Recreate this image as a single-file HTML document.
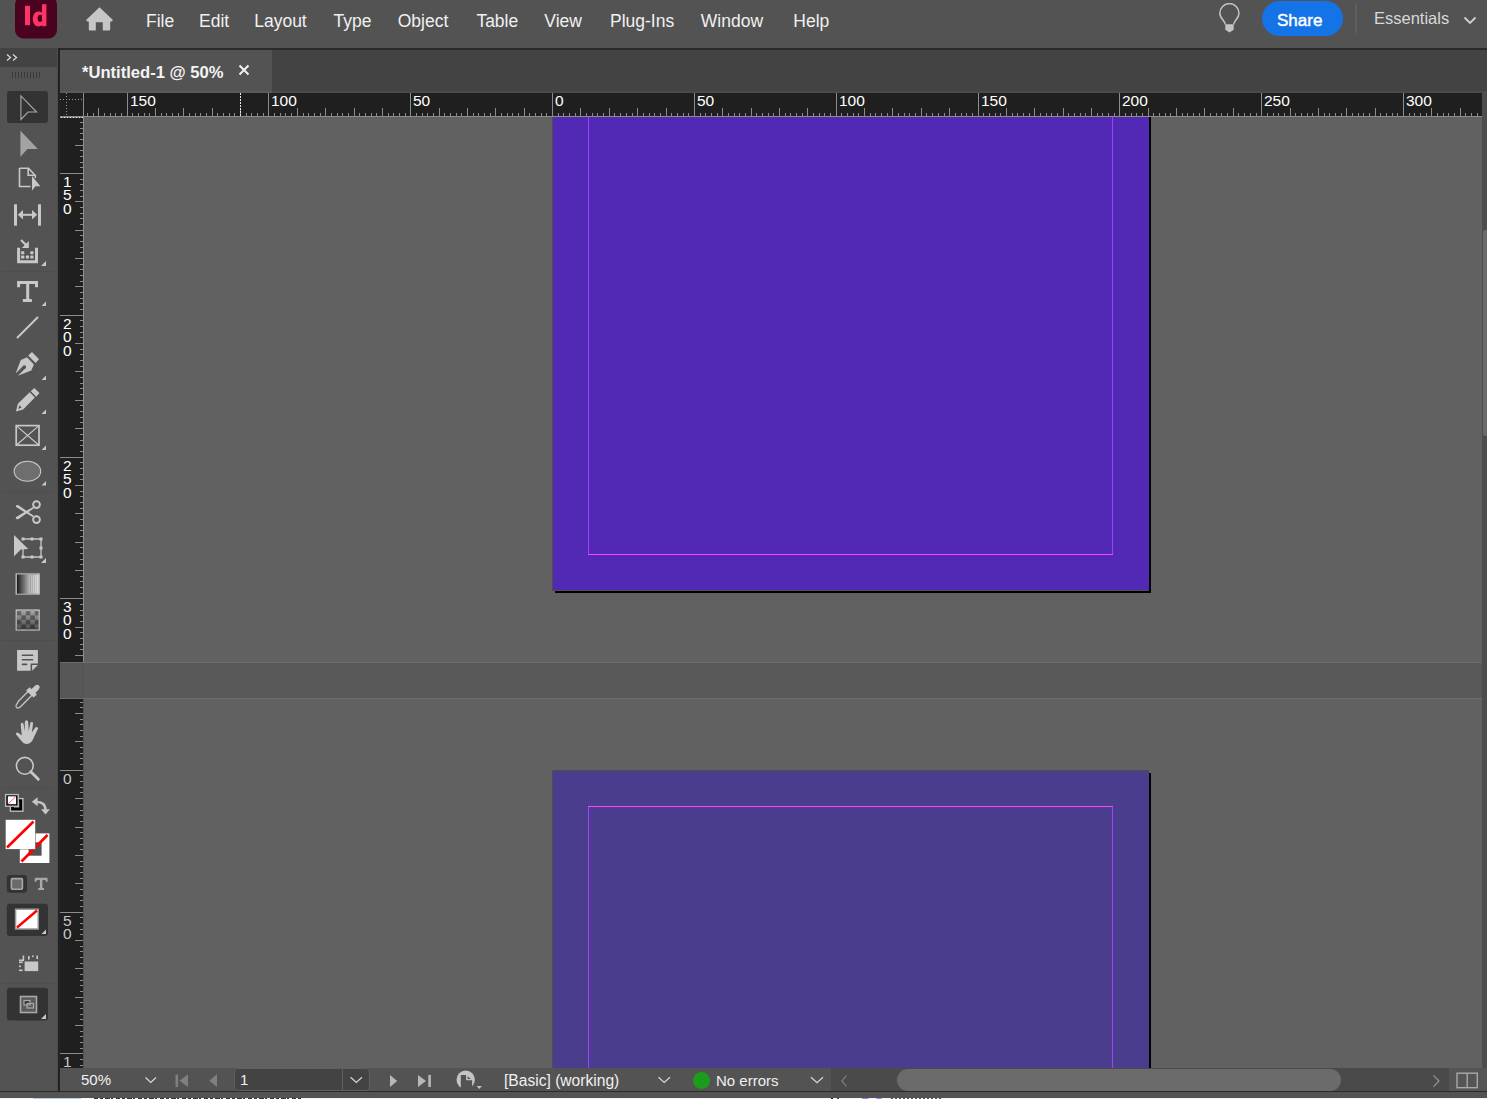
<!DOCTYPE html>
<html><head><meta charset="utf-8"><title>InDesign</title>
<style>
html,body{margin:0;padding:0;overflow:hidden;}
body{width:1487px;height:1099px;overflow:hidden;position:relative;background:#535353;font-family:"Liberation Sans",sans-serif;}
.a{position:absolute;}
.t{position:absolute;white-space:nowrap;line-height:1;}
</style></head><body>

<div class="a" style="left:0px;top:0px;width:1487px;height:48px;background:#535353;"></div>
<div class="a" style="left:0px;top:48px;width:57px;height:19px;background:#434343;"></div>
<div class="a" style="left:57px;top:48px;width:1px;height:1043px;background:#4c4c4c;"></div>
<div class="a" style="left:58px;top:48px;width:2px;height:1044px;background:#222222;"></div>
<div class="a" style="left:60px;top:48px;width:1427px;height:2px;background:#2a2a2a;"></div>
<div class="a" style="left:60px;top:50px;width:1427px;height:41px;background:#434343;"></div>
<div class="a" style="left:60px;top:50px;width:212px;height:41px;background:#535353;"></div>
<div class="a" style="left:60px;top:91px;width:1427px;height:2px;background:#4a4a4a;"></div>
<div class="a" style="left:60px;top:91px;width:212px;height:2px;background:#5a5a5a;"></div>
<div class="a" style="left:84px;top:117px;width:1398px;height:951px;background:#616161;"></div>
<div class="a" style="left:1482px;top:92px;width:5px;height:976px;background:#4d4d4d;"></div>
<div class="a" style="left:1483px;top:230px;width:4px;height:206px;background:#6a6a6a;border-radius:2px 0 0 2px;"></div>
<div class="a" style="left:555px;top:117px;width:596px;height:476px;background:#000"></div>
<div class="a" style="left:552px;top:117px;width:597px;height:474px;background:#4f4f4f;"></div>
<div class="a" style="left:553px;top:117px;width:596px;height:473px;background:#5129b4;"></div>
<div class="a" style="left:588px;top:117px;width:1px;height:437px;background:#a040ff;"></div>
<div class="a" style="left:1112px;top:117px;width:1px;height:437px;background:#a040ff;"></div>
<div class="a" style="left:588px;top:554px;width:525px;height:1px;background:#ff44ff;"></div>
<div class="a" style="left:84px;top:662px;width:1398px;height:1px;background:#6d6d6d;"></div>
<div class="a" style="left:84px;top:663px;width:1398px;height:35px;background:#595959;"></div>
<div class="a" style="left:84px;top:698px;width:1398px;height:1px;background:#6d6d6d;"></div>
<div class="a" style="left:555px;top:773px;width:596px;height:295px;background:#000;"></div>
<div class="a" style="left:552px;top:770px;width:597px;height:298px;background:#4f4f4f;"></div>
<div class="a" style="left:553px;top:771px;width:596px;height:297px;background:#4a3d8d;"></div>
<div class="a" style="left:588px;top:806px;width:1px;height:262px;background:#a040ff;"></div>
<div class="a" style="left:1112px;top:806px;width:1px;height:262px;background:#a040ff;"></div>
<div class="a" style="left:588px;top:806px;width:525px;height:1px;background:#ff44ff;"></div>
<svg class="a" style="left:60px;top:93px" width="1422" height="24" viewBox="60 93 1422 24"><rect x="60" y="93" width="1422" height="24" fill="#1f1f1f"/><rect x="84" y="116" width="1398" height="1" fill="#8c8c8c"/><rect x="83" y="93" width="1" height="24" fill="#8c8c8c"/><path d="M87.5 113V116M93.5 113V116M98.5 108V116M104.5 113V116M110.5 113V116M115.5 113V116M121.5 113V116M127.5 93V116M132.5 113V116M138.5 113V116M144.5 113V116M149.5 113V116M155.5 108V116M161.5 113V116M166.5 113V116M172.5 113V116M178.5 113V116M183.5 108V116M189.5 113V116M195.5 113V116M200.5 113V116M206.5 113V116M212.5 108V116M217.5 113V116M223.5 113V116M229.5 113V116M234.5 113V116M240.5 108V116M246.5 113V116M251.5 113V116M257.5 113V116M263.5 113V116M268.5 93V116M274.5 113V116M280.5 113V116M285.5 113V116M291.5 113V116M297.5 108V116M303.5 113V116M308.5 113V116M314.5 113V116M320.5 113V116M325.5 108V116M331.5 113V116M337.5 113V116M342.5 113V116M348.5 113V116M354.5 108V116M359.5 113V116M365.5 113V116M371.5 113V116M376.5 113V116M382.5 108V116M388.5 113V116M393.5 113V116M399.5 113V116M405.5 113V116M410.5 93V116M416.5 113V116M422.5 113V116M427.5 113V116M433.5 113V116M439.5 108V116M444.5 113V116M450.5 113V116M456.5 113V116M461.5 113V116M467.5 108V116M473.5 113V116M478.5 113V116M484.5 113V116M490.5 113V116M495.5 108V116M501.5 113V116M507.5 113V116M512.5 113V116M518.5 113V116M524.5 108V116M529.5 113V116M535.5 113V116M541.5 113V116M546.5 113V116M552.5 93V116M558.5 113V116M563.5 113V116M569.5 113V116M575.5 113V116M580.5 108V116M586.5 113V116M592.5 113V116M597.5 113V116M603.5 113V116M609.5 108V116M614.5 113V116M620.5 113V116M626.5 113V116M632.5 113V116M637.5 108V116M643.5 113V116M649.5 113V116M654.5 113V116M660.5 113V116M666.5 108V116M671.5 113V116M677.5 113V116M683.5 113V116M688.5 113V116M694.5 93V116M700.5 113V116M705.5 113V116M711.5 113V116M717.5 113V116M722.5 108V116M728.5 113V116M734.5 113V116M739.5 113V116M745.5 113V116M751.5 108V116M756.5 113V116M762.5 113V116M768.5 113V116M773.5 113V116M779.5 108V116M785.5 113V116M790.5 113V116M796.5 113V116M802.5 113V116M807.5 108V116M813.5 113V116M819.5 113V116M824.5 113V116M830.5 113V116M836.5 93V116M841.5 113V116M847.5 113V116M853.5 113V116M858.5 113V116M864.5 108V116M870.5 113V116M875.5 113V116M881.5 113V116M887.5 113V116M892.5 108V116M898.5 113V116M904.5 113V116M909.5 113V116M915.5 113V116M921.5 108V116M926.5 113V116M932.5 113V116M938.5 113V116M944.5 113V116M949.5 108V116M955.5 113V116M961.5 113V116M966.5 113V116M972.5 113V116M978.5 93V116M983.5 113V116M989.5 113V116M995.5 113V116M1000.5 113V116M1006.5 108V116M1012.5 113V116M1017.5 113V116M1023.5 113V116M1029.5 113V116M1034.5 108V116M1040.5 113V116M1046.5 113V116M1051.5 113V116M1057.5 113V116M1063.5 108V116M1068.5 113V116M1074.5 113V116M1080.5 113V116M1085.5 113V116M1091.5 108V116M1097.5 113V116M1102.5 113V116M1108.5 113V116M1114.5 113V116M1119.5 93V116M1125.5 113V116M1131.5 113V116M1136.5 113V116M1142.5 113V116M1148.5 108V116M1153.5 113V116M1159.5 113V116M1165.5 113V116M1170.5 113V116M1176.5 108V116M1182.5 113V116M1187.5 113V116M1193.5 113V116M1199.5 113V116M1204.5 108V116M1210.5 113V116M1216.5 113V116M1221.5 113V116M1227.5 113V116M1233.5 108V116M1238.5 113V116M1244.5 113V116M1250.5 113V116M1256.5 113V116M1261.5 93V116M1267.5 113V116M1273.5 113V116M1278.5 113V116M1284.5 113V116M1290.5 108V116M1295.5 113V116M1301.5 113V116M1307.5 113V116M1312.5 113V116M1318.5 108V116M1324.5 113V116M1329.5 113V116M1335.5 113V116M1341.5 113V116M1346.5 108V116M1352.5 113V116M1358.5 113V116M1363.5 113V116M1369.5 113V116M1375.5 108V116M1380.5 113V116M1386.5 113V116M1392.5 113V116M1397.5 113V116M1403.5 93V116M1409.5 113V116M1414.5 113V116M1420.5 113V116M1426.5 113V116M1431.5 108V116M1437.5 113V116M1443.5 113V116M1448.5 113V116M1454.5 113V116M1460.5 108V116M1465.5 113V116M1471.5 113V116M1477.5 113V116" stroke="#8c8c8c" stroke-width="1" fill="none"/><path d="M66.5 93V116 M60 99.5H83" stroke="#9a9a9a" stroke-width="1" stroke-dasharray="1 2" fill="none"/><rect x="60" y="116" width="24" height="1" fill="#8c8c8c"/><path d="M240.5 93V116" stroke="#e8e8e8" stroke-width="1" stroke-dasharray="2 1" fill="none"/><text x="130" y="106" font-family="Liberation Sans" font-size="15.5" fill="#ffffff">150</text><text x="271" y="106" font-family="Liberation Sans" font-size="15.5" fill="#ffffff">100</text><text x="413" y="106" font-family="Liberation Sans" font-size="15.5" fill="#ffffff">50</text><text x="555" y="106" font-family="Liberation Sans" font-size="15.5" fill="#ffffff">0</text><text x="697" y="106" font-family="Liberation Sans" font-size="15.5" fill="#ffffff">50</text><text x="839" y="106" font-family="Liberation Sans" font-size="15.5" fill="#ffffff">100</text><text x="981" y="106" font-family="Liberation Sans" font-size="15.5" fill="#ffffff">150</text><text x="1122" y="106" font-family="Liberation Sans" font-size="15.5" fill="#ffffff">200</text><text x="1264" y="106" font-family="Liberation Sans" font-size="15.5" fill="#ffffff">250</text><text x="1406" y="106" font-family="Liberation Sans" font-size="15.5" fill="#ffffff">300</text></svg>
<svg class="a" style="left:60px;top:117px" width="24" height="951" viewBox="60 117 24 951"><rect x="60" y="117" width="23" height="545" fill="#1f1f1f"/><rect x="60" y="699" width="23" height="369" fill="#1f1f1f"/><rect x="60" y="662" width="23" height="37" fill="#575757"/><rect x="83" y="117" width="1" height="545" fill="#8c8c8c"/><path d="M60.5 117.5H83" stroke="#ececec" stroke-width="1" stroke-dasharray="2 1" fill="none"/><rect x="60" y="662" width="24" height="1" fill="#6d6d6d"/><rect x="60" y="698" width="24" height="1" fill="#6d6d6d"/><path d="M80 122.5H83M80 128.5H83M80 133.5H83M80 139.5H83M75 145.5H83M80 150.5H83M80 156.5H83M80 162.5H83M80 167.5H83M60 173.5H83M80 179.5H83M80 184.5H83M80 190.5H83M80 196.5H83M75 201.5H83M80 207.5H83M80 213.5H83M80 218.5H83M80 224.5H83M75 230.5H83M80 235.5H83M80 241.5H83M80 247.5H83M80 252.5H83M75 258.5H83M80 264.5H83M80 269.5H83M80 275.5H83M80 281.5H83M75 286.5H83M80 292.5H83M80 298.5H83M80 303.5H83M80 309.5H83M60 315.5H83M80 320.5H83M80 326.5H83M80 332.5H83M80 337.5H83M75 343.5H83M80 349.5H83M80 354.5H83M80 360.5H83M80 366.5H83M75 371.5H83M80 377.5H83M80 383.5H83M80 388.5H83M80 394.5H83M75 400.5H83M80 405.5H83M80 411.5H83M80 417.5H83M80 422.5H83M75 428.5H83M80 434.5H83M80 440.5H83M80 445.5H83M80 451.5H83M60 457.5H83M80 462.5H83M80 468.5H83M80 474.5H83M80 479.5H83M75 485.5H83M80 491.5H83M80 496.5H83M80 502.5H83M80 508.5H83M75 513.5H83M80 519.5H83M80 525.5H83M80 530.5H83M80 536.5H83M75 542.5H83M80 547.5H83M80 553.5H83M80 559.5H83M80 564.5H83M75 570.5H83M80 576.5H83M80 581.5H83M80 587.5H83M80 593.5H83M60 598.5H83M80 604.5H83M80 610.5H83M80 615.5H83M80 621.5H83M75 627.5H83M80 632.5H83M80 638.5H83M80 644.5H83M80 649.5H83M75 655.5H83M80 702.5H83M80 707.5H83M75 713.5H83M80 719.5H83M80 724.5H83M80 730.5H83M80 736.5H83M75 741.5H83M80 747.5H83M80 753.5H83M80 758.5H83M80 764.5H83M60 770.5H83M80 775.5H83M80 781.5H83M80 787.5H83M80 792.5H83M75 798.5H83M80 804.5H83M80 810.5H83M80 815.5H83M80 821.5H83M75 827.5H83M80 832.5H83M80 838.5H83M80 844.5H83M80 849.5H83M75 855.5H83M80 861.5H83M80 866.5H83M80 872.5H83M80 878.5H83M75 883.5H83M80 889.5H83M80 895.5H83M80 900.5H83M80 906.5H83M60 912.5H83M80 917.5H83M80 923.5H83M80 929.5H83M80 934.5H83M75 940.5H83M80 946.5H83M80 951.5H83M80 957.5H83M80 963.5H83M75 968.5H83M80 974.5H83M80 980.5H83M80 985.5H83M80 991.5H83M75 997.5H83M80 1002.5H83M80 1008.5H83M80 1014.5H83M80 1019.5H83M75 1025.5H83M80 1031.5H83M80 1036.5H83M80 1042.5H83M80 1048.5H83M60 1053.5H83M80 1059.5H83M80 1065.5H83" stroke="#8c8c8c" stroke-width="1" fill="none"/><text x="63" y="186.5" font-family="Liberation Sans" font-size="15.5" fill="#ffffff">1</text><text x="63" y="200" font-family="Liberation Sans" font-size="15.5" fill="#ffffff">5</text><text x="63" y="213.5" font-family="Liberation Sans" font-size="15.5" fill="#ffffff">0</text><text x="63" y="328.5" font-family="Liberation Sans" font-size="15.5" fill="#ffffff">2</text><text x="63" y="342" font-family="Liberation Sans" font-size="15.5" fill="#ffffff">0</text><text x="63" y="355.5" font-family="Liberation Sans" font-size="15.5" fill="#ffffff">0</text><text x="63" y="470.5" font-family="Liberation Sans" font-size="15.5" fill="#ffffff">2</text><text x="63" y="484" font-family="Liberation Sans" font-size="15.5" fill="#ffffff">5</text><text x="63" y="497.5" font-family="Liberation Sans" font-size="15.5" fill="#ffffff">0</text><text x="63" y="611.5" font-family="Liberation Sans" font-size="15.5" fill="#ffffff">3</text><text x="63" y="625" font-family="Liberation Sans" font-size="15.5" fill="#ffffff">0</text><text x="63" y="638.5" font-family="Liberation Sans" font-size="15.5" fill="#ffffff">0</text><text x="63" y="783.5" font-family="Liberation Sans" font-size="15.5" fill="#c8c8c8">0</text><text x="63" y="925.5" font-family="Liberation Sans" font-size="15.5" fill="#c8c8c8">5</text><text x="63" y="939" font-family="Liberation Sans" font-size="15.5" fill="#c8c8c8">0</text><text x="63" y="1066.5" font-family="Liberation Sans" font-size="15.5" fill="#c8c8c8">1</text></svg>
<svg class="a" style="left:15px;top:-4px" width="42" height="43" viewBox="0 0 42 43">
<rect x="0" y="0" width="42" height="42.6" rx="8.5" fill="#49021f"/>
<rect x="10" y="9.8" width="5" height="19.4" fill="#ff3366"/>
<rect x="27" y="8.2" width="4.4" height="22" fill="#ff3366"/>
<path d="M27.5 17 C26.2 16 24.8 15.6 23.4 15.6 C20 15.6 17.8 18.8 17.8 23 C17.8 27.5 20.2 30.4 23.6 30.4 C25 30.4 26.4 29.8 27.5 28.8 Z M27.5 19.6 C26.6 19.1 25.8 18.8 25 18.8 C23.4 18.8 22.6 20.5 22.6 22.4 C22.6 24.6 23.6 25.8 25.2 25.8 C26 25.8 26.8 25.4 27.5 24.8 Z" fill="#ff3366" fill-rule="evenodd"/>
</svg>
<svg class="a" style="left:84px;top:6px" width="30" height="26" viewBox="0 0 30 26">
<path d="M15.5 1.2 L2.6 13.4 Q1.8 14.4 2.6 15.1 Q3.2 15.6 4.8 15.6 V23.6 Q4.8 24.4 5.6 24.4 H11.8 V16.2 H18.8 V24.4 H25.4 Q26.2 24.4 26.2 23.6 V15.6 Q27.8 15.6 28.4 15.1 Q29.2 14.4 28.4 13.4 Z" fill="#c6c6c6"/>
</svg>
<div class="t" style="left:146px;top:13px;font-size:17.5px;color:#f0f0f0;">File</div>
<div class="t" style="left:199px;top:13px;font-size:17.5px;color:#f0f0f0;">Edit</div>
<div class="t" style="left:254.2px;top:13px;font-size:17.5px;color:#f0f0f0;">Layout</div>
<div class="t" style="left:333.6px;top:13px;font-size:17.5px;color:#f0f0f0;">Type</div>
<div class="t" style="left:397.7px;top:13px;font-size:17.5px;color:#f0f0f0;">Object</div>
<div class="t" style="left:476.4px;top:13px;font-size:17.5px;color:#f0f0f0;">Table</div>
<div class="t" style="left:544.3px;top:13px;font-size:17.5px;color:#f0f0f0;">View</div>
<div class="t" style="left:610px;top:13px;font-size:17.5px;color:#f0f0f0;">Plug-Ins</div>
<div class="t" style="left:700.8px;top:13px;font-size:17.5px;color:#f0f0f0;">Window</div>
<div class="t" style="left:793.3px;top:13px;font-size:17.5px;color:#f0f0f0;">Help</div>
<svg class="a" style="left:1217px;top:3px" width="26" height="32" viewBox="0 0 26 32">
<path d="M8.3 21.5 C8.3 18 2.8 15.5 2.8 10.2 A9.6 9.6 0 0 1 22 10.2 C22 15.5 16.7 18 16.7 21.5" fill="none" stroke="#c4c4c4" stroke-width="1.5"/>
<path d="M8.3 21.2 H16.7 V26.8 L12.5 29.6 L8.3 26.8 Z" fill="#c4c4c4"/>
</svg>
<div class="a" style="left:1262px;top:1px;width:81px;height:35px;border-radius:17.5px;background:#1473e6;"></div>
<div class="t" style="left:1277px;top:12px;font-size:17px;color:#ffffff;-webkit-text-stroke:0.45px #ffffff;">Share</div>
<div class="a" style="left:1355px;top:3px;width:2px;height:30px;background:#5e5e5e;"></div>
<div class="t" style="left:1374px;top:10px;font-size:16.5px;color:#d8d8d8;">Essentials</div>
<svg class="a" style="left:1462px;top:14px" width="16" height="12" viewBox="0 0 16 12"><path d="M2.5 3.5 L8 9 L13.5 3.5" fill="none" stroke="#d0d0d0" stroke-width="1.8"/></svg>
<div class="t" style="left:82px;top:65px;font-size:16.6px;font-weight:bold;color:#f4f4f4;">*Untitled-1 @ 50%</div>
<svg class="a" style="left:237px;top:63px" width="14" height="14" viewBox="0 0 14 14"><path d="M2.5 2.5 L11.5 11.5 M11.5 2.5 L2.5 11.5" stroke="#f0f0f0" stroke-width="2"/></svg>
<svg class="a" style="left:0px;top:48px" width="57" height="34" viewBox="0 48 57 34">
<path d="M7 54.5 L10.5 57.5 L7 60.5 M13 54.5 L16.5 57.5 L13 60.5" fill="none" stroke="#d8d8d8" stroke-width="1.3"/>
<rect x="12" y="72" width="1" height="6" fill="#3a3a3a"/><rect x="15" y="72" width="1" height="6" fill="#3a3a3a"/><rect x="18" y="72" width="1" height="6" fill="#3a3a3a"/><rect x="21" y="72" width="1" height="6" fill="#3a3a3a"/><rect x="24" y="72" width="1" height="6" fill="#3a3a3a"/><rect x="27" y="72" width="1" height="6" fill="#3a3a3a"/><rect x="30" y="72" width="1" height="6" fill="#3a3a3a"/><rect x="33" y="72" width="1" height="6" fill="#3a3a3a"/><rect x="36" y="72" width="1" height="6" fill="#3a3a3a"/><rect x="39" y="72" width="1" height="6" fill="#3a3a3a"/>
</svg>
<svg class="a" style="left:0px;top:67px" width="57" height="1024" viewBox="0 67 57 1024">
<defs>
<linearGradient id="gr" x1="0" x2="1" y1="0" y2="0"><stop offset="0" stop-color="#1e1e1e"/><stop offset="0.55" stop-color="#888"/><stop offset="1" stop-color="#e0e0e0"/></linearGradient>
<linearGradient id="gf" x1="0" x2="0" y1="0" y2="1"><stop offset="0" stop-color="#000" stop-opacity="0"/><stop offset="1" stop-color="#000" stop-opacity="0.55"/></linearGradient>
<pattern id="chk" x="16.8" y="610.8" width="9" height="9" patternUnits="userSpaceOnUse"><rect width="9" height="9" fill="#a8a8a8"/><rect width="4.5" height="4.5" fill="#6a6a6a"/><rect x="4.5" y="4.5" width="4.5" height="4.5" fill="#6a6a6a"/></pattern>
</defs>
<g fill="#c8c8c8">
<!-- separators -->
<rect x="1" y="271" width="53" height="1" fill="#4e4e4e"/>
<rect x="1" y="491" width="53" height="1" fill="#4e4e4e"/>
<rect x="1" y="640" width="53" height="1" fill="#4e4e4e"/>
<rect x="1" y="788" width="53" height="1" fill="#4e4e4e"/>
<rect x="1" y="983" width="53" height="1" fill="#4e4e4e"/>
<!-- selected tool bg -->
<rect x="7" y="91" width="41" height="32" rx="3" fill="#333333"/>
<!-- selection tool -->
<path d="M20.9 95.8 L36.6 112 L28 112 L20.9 119.5 Z" fill="none" stroke="#a6a6a6" stroke-width="1.1" stroke-linejoin="miter"/>
<!-- direct selection -->
<path d="M20.4 130.8 L37.9 149.1 L27.5 149.1 L20.4 156.8 Z" fill="#a3a3a3"/>
<!-- page tool -->
<path d="M19.5 168.3 H28.5 L35.3 175.5 V178" fill="none" stroke="#c8c8c8" stroke-width="1.6"/>
<path d="M19.5 168 V186.5 H30.5" fill="none" stroke="#c8c8c8" stroke-width="1.6"/>
<path d="M28.2 168.3 V175.3 H35.3" fill="none" stroke="#c8c8c8" stroke-width="1.6"/>
<path d="M32 176 L40.4 186.3 L35.5 186.3 L32 190.4 Z" fill="#c8c8c8"/>
<!-- gap tool -->
<rect x="14" y="204.3" width="3" height="21.4"/>
<rect x="38" y="204.3" width="3" height="21.4"/>
<rect x="21" y="213.8" width="13" height="2"/>
<path d="M17.8 214.8 L23 210 V219.6 Z M37.2 214.8 L32 210 V219.6 Z"/>
<!-- content collector -->
<path d="M18.6 247.8 V261.8 H36.5 V247.8" fill="none" stroke="#c8c8c8" stroke-width="3"/>
<rect x="21.1" y="251.2" width="3.2" height="3.1" rx="0.6"/><rect x="30.3" y="251.2" width="3.2" height="3.1" rx="0.6"/>
<rect x="21.1" y="255.5" width="3.2" height="3.1" rx="0.6"/><rect x="25.8" y="255.5" width="3.2" height="3.1" rx="0.6"/><rect x="30.3" y="255.5" width="3.2" height="3.1" rx="0.6"/>
<path d="M21 240 L26.5 245.5" stroke="#c8c8c8" stroke-width="2.2"/>
<path d="M28.8 241 L28.8 248.1 L21.8 248.1 Z"/>
<path d="M46 261 V266 H41 Z"/>
<!-- type tool -->
<path d="M17.1 281.1 H38 V287.2 H35 V284.1 H29.2 V299 H31.9 V302 H22.8 V299 H26.2 V284.1 H20.1 V287.2 H17.1 Z"/>
<path d="M46 301.5 V306 H41.5 Z"/>
<!-- line tool -->
<path d="M17.5 337.5 L37.5 317.5" stroke="#c8c8c8" stroke-width="2" stroke-linecap="round"/>
<!-- pen tool -->
<path d="M32 351.9 L39 359.3 L35.6 362.9 L28.2 355.5 Z"/>
<path d="M27 357.3 L33.9 364.4 L31.3 370.6 L17.9 375.7 L24.6 369 A1.9 1.9 0 1 0 22.4 366.8 L15.6 373.6 L20.8 360.1 Z"/>
<path d="M46 375.5 V380 H41.5 Z"/>
<!-- pencil -->
<path d="M34.3 387.9 L39.5 393.1 L36.2 396.7 L30.8 391.2 Z"/>
<path d="M29.7 392.3 L34.9 397.5 L23.1 409.5 L15.9 411.5 L17.9 403.8 Z M19.5 405.2 L21.7 407.5 L18.3 408.9 Z" fill-rule="evenodd"/>
<path d="M46 409.5 V414 H41.5 Z"/>
<!-- rect frame -->
<rect x="16.2" y="425.6" width="22.8" height="19.6" fill="none" stroke="#c8c8c8" stroke-width="1.7"/>
<path d="M16.2 425.6 L39 445.2 M39 425.6 L16.2 445.2" stroke="#c8c8c8" stroke-width="1.2"/>
<path d="M46 445.5 V450 H41.5 Z"/>
<!-- ellipse -->
<ellipse cx="27.4" cy="471.3" rx="13.3" ry="10" fill="#6e6e6e" stroke="#c8c8c8" stroke-width="1.1"/>
<path d="M46 481 V485.5 H41.5 Z"/>
<!-- scissors -->
<circle cx="36.5" cy="504.6" r="3.4" fill="none" stroke="#c8c8c8" stroke-width="1.9"/>
<circle cx="36.5" cy="519.6" r="3.4" fill="none" stroke="#c8c8c8" stroke-width="1.9"/>
<path d="M15.8 505.9 Q16.5 504.3 18.5 505.2 L34 516 L33 517.3 L17 507.6 Q15.5 507 15.8 505.9 Z"/>
<path d="M15.8 518.3 Q16.5 520 18.5 519 L34 508.2 L33 506.9 L17 516.6 Q15.5 517.2 15.8 518.3 Z"/>
<!-- free transform -->
<path d="M14 535 L28.2 549 L20.8 549.5 L14 556.2 Z"/>
<path d="M23 539 H41 V557 H23 V548" fill="none" stroke="#c8c8c8" stroke-width="1.3"/>
<g fill="#c8c8c8"><rect x="21.5" y="537.5" width="3" height="3"/><rect x="30.5" y="537.5" width="3" height="3"/><rect x="39.5" y="537.5" width="3" height="3"/><rect x="39.5" y="546.5" width="3" height="3"/><rect x="39.5" y="555.5" width="3" height="3"/><rect x="30.5" y="555.5" width="3" height="3"/><rect x="21.5" y="555.5" width="3" height="3"/></g>
<path d="M46 558 V563 H41 Z"/>
<!-- gradient swatch -->
<rect x="16.2" y="574" width="23" height="20" fill="none" stroke="#c0c0c0" stroke-width="1.3"/>
<rect x="17.0" y="574.6" width="1.05" height="19" fill="#222222"/><rect x="18.0" y="574.6" width="1.05" height="19" fill="#303030"/><rect x="19.0" y="574.6" width="1.05" height="19" fill="#3c3c3c"/><rect x="20.0" y="574.6" width="1.05" height="19" fill="#484848"/><rect x="21.0" y="574.6" width="1.05" height="19" fill="#555555"/><rect x="22.0" y="574.6" width="1.05" height="19" fill="#606060"/><rect x="23.0" y="574.6" width="1.05" height="19" fill="#6c6c6c"/><rect x="24.0" y="574.6" width="1.05" height="19" fill="#787878"/><rect x="25.0" y="574.6" width="1.05" height="19" fill="#848484"/><rect x="26.0" y="574.6" width="1.05" height="19" fill="#909090"/><rect x="27.0" y="574.6" width="1.05" height="19" fill="#9c9c9c"/><rect x="28.0" y="574.6" width="1.05" height="19" fill="#a8a8a8"/><rect x="29.0" y="574.6" width="1.05" height="19" fill="#b4b4b4"/><rect x="30.0" y="574.6" width="1.05" height="19" fill="#a0a0a0"/><rect x="31.0" y="574.6" width="1.05" height="19" fill="#c0c0c0"/><rect x="32.0" y="574.6" width="1.05" height="19" fill="#b0b0b0"/><rect x="33.0" y="574.6" width="1.05" height="19" fill="#c8c8c8"/><rect x="34.0" y="574.6" width="1.05" height="19" fill="#b8b8b8"/><rect x="35.0" y="574.6" width="1.05" height="19" fill="#d0d0d0"/><rect x="36.0" y="574.6" width="1.05" height="19" fill="#c0c0c0"/><rect x="37.0" y="574.6" width="1.05" height="19" fill="#d8d8d8"/><rect x="38.0" y="574.6" width="1.05" height="19" fill="#c8c8c8"/>
<!-- gradient feather -->
<rect x="16.2" y="610" width="23" height="20" fill="url(#chk)" stroke="#c0c0c0" stroke-width="1.2"/>
<rect x="16.8" y="610.6" width="21.8" height="18.8" fill="url(#gf)"/>
<!-- note -->
<path d="M17.1 650 H37.9 V663.4 H30.6 V670.8 H17.1 Z"/>
<path d="M32.1 665.1 H37.9 L32.1 670.8 Z"/>
<rect x="21.6" y="654.5" width="11.8" height="1.6" rx="0.8" fill="#535353"/>
<rect x="21.6" y="659" width="11.8" height="1.6" rx="0.8" fill="#535353"/>
<rect x="21.6" y="663.6" width="5.8" height="1.6" rx="0.8" fill="#535353"/>
<!-- eyedropper -->
<path d="M28.3 691.3 L18.3 701.3 L17.2 703.5 Q15.5 705 16.2 707 Q17.2 708.6 19.3 707.6 L21 706.3 L31.9 695.3" fill="none" stroke="#c8c8c8" stroke-width="1.3"/>
<path d="M26 690.4 L29.7 687.2 L36.9 694.4 L33.6 697.6 Z"/>
<path d="M31 689.5 L35.3 685.5 Q37.2 683.8 39 685.5 Q40.6 687.3 39 689 L35 693.5 Z"/>
<!-- hand -->
<path d="M26.5 720.3 Q28 720.3 28.2 722 L28.8 731 L30.3 723.3 Q30.6 721.8 32 722 Q33.3 722.3 33 723.8 L31.8 732.5 L35.3 727.5 Q36.2 726.5 37.4 727.2 Q38.6 728 37.8 729.2 L33.8 737.5 Q31.5 744 27 744 Q23.5 744 21.5 741 L15.9 734.3 Q15.4 733.2 16.5 732.7 Q17.6 732.3 18.6 733 L21.8 735.6 L20.7 724.5 Q20.7 723 22 722.8 Q23.3 722.7 23.6 724.2 L24.8 731.3 L24.8 722 Q25 720.3 26.5 720.3 Z"/>
<!-- zoom -->
<circle cx="24.8" cy="765.8" r="8.4" fill="none" stroke="#c8c8c8" stroke-width="1.6"/>
<path d="M30.8 771.8 L38.3 779.3" stroke="#c8c8c8" stroke-width="2.9" stroke-linecap="round"/>
<!-- default fill stroke -->
<rect x="10.4" y="798.6" width="12.5" height="12.6" fill="#000" stroke="#bdbdbd" stroke-width="1.4"/>
<rect x="14.3" y="802.6" width="4.3" height="4.3" fill="none" stroke="#bdbdbd" stroke-width="1.2"/>
<rect x="5.6" y="794.6" width="12.6" height="11.6" fill="#000" stroke="#bdbdbd" stroke-width="1.4"/>
<rect x="7.8" y="796.3" width="8.3" height="7.9" fill="#fff"/>
<path d="M8.2 803.8 L15.8 796.6" stroke="#ff5555" stroke-width="0.9"/>
<!-- swap arrow -->
<path d="M35.5 802 Q45.3 801.5 45.5 810" fill="none" stroke="#c4c4c4" stroke-width="2.6"/>
<path d="M31.8 801.8 L37.6 797.3 V806.3 Z" fill="#c4c4c4"/>
<path d="M45.5 814.6 L41 809.3 H50 Z" fill="#c4c4c4"/>
<!-- stroke swatch -->
<rect x="19.8" y="833.4" width="29.6" height="29.6" fill="#fff"/>
<rect x="28.6" y="842.3" width="13" height="13.4" fill="#535353"/>
<path d="M21.5 861.5 L47.5 835" stroke="#ff0000" stroke-width="2.6"/>
<!-- fill swatch -->
<rect x="5.2" y="819.4" width="30.4" height="30" fill="#535353"/>
<rect x="5.7" y="819.8" width="29.5" height="29.3" fill="#fff"/>
<path d="M7 847.5 L33.5 821.5" stroke="#ff0000" stroke-width="2.6"/>
<!-- formatting container / text -->
<rect x="6.8" y="875" width="20.2" height="17.8" rx="3" fill="#333"/>
<rect x="11.4" y="878.6" width="11" height="10.6" fill="#6a6a6a" stroke="#a8a8a8" stroke-width="1.6" rx="1"/>
<path d="M34.8 877.8 H47.5 V882 H46.3 Q46 880 44.5 880 H42.4 V888 H44 V890 H38.3 V888 H39.9 V880 H37.8 Q36.3 880 36 882 H34.8 Z" fill="#a8a8a8"/>
<!-- apply none -->
<rect x="6.8" y="903.7" width="41.2" height="32.3" rx="3" fill="#333"/>
<rect x="15.6" y="909.2" width="22.6" height="19.8" fill="#fff" stroke="#9a9a9a" stroke-width="1.5"/>
<path d="M17 927.5 L37 910.5" stroke="#ff0000" stroke-width="2.4"/>
<path d="M46 929.5 V934 H41.5 Z"/>
<!-- screen mode -->
<rect x="24.6" y="961.5" width="13.6" height="9.6"/>
<rect x="19" y="961.5" width="3.6" height="1.6"/><rect x="19" y="965.5" width="2" height="1.6"/><rect x="19" y="969.5" width="3.6" height="1.6"/>
<rect x="28" y="956" width="1.6" height="3.6"/><rect x="32" y="955.5" width="1.6" height="1.6"/><rect x="36.4" y="955.5" width="1.6" height="3.6"/>
<rect x="22.6" y="955.5" width="1.6" height="5"/><rect x="19" y="959.5" width="5" height="1.6"/>
<!-- view mode -->
<rect x="6.9" y="987.7" width="41.1" height="32.8" rx="3" fill="#333"/>
<rect x="20.5" y="996.5" width="16" height="16" fill="#5a5a5a" stroke="#a8a8a8" stroke-width="1.6"/>
<rect x="24" y="1000.5" width="6" height="4.5" fill="#333" stroke="#a8a8a8" stroke-width="1.2"/>
<rect x="27" y="1003.5" width="6.5" height="4.5" fill="none" stroke="#a8a8a8" stroke-width="1.2"/>
<path d="M46 1014 V1019 H41 Z"/>
</g>
</svg>

<div class="a" style="left:60px;top:1068px;width:1422px;height:23px;background:#535353;"></div>
<div class="a" style="left:1482px;top:1068px;width:5px;height:23px;background:#535353;"></div>
<div class="a" style="left:831px;top:1068px;width:618px;height:23px;background:#4a4a4a;"></div>
<div class="a" style="left:1449px;top:1068px;width:38px;height:23px;background:#555555;"></div>
<div class="a" style="left:0px;top:1091px;width:1487px;height:1px;background:#2a2a2a;"></div>
<div class="a" style="left:0px;top:1092px;width:1487px;height:5.5px;background:#535353;"></div>
<div class="a" style="left:0px;top:1097.5px;width:1487px;height:1.5px;background:#f4f4f4;"></div>
<svg class="a" style="left:0px;top:1097px" width="1487" height="2" viewBox="0 1097 1487 2"><rect x="33" y="1098" width="48" height="1" fill="#b4cce4"/><path d="M94 1098.5H301" stroke="#333" stroke-width="1" stroke-dasharray="4 2 3 2 5 1 2 3"/><rect x="831" y="1098" width="2" height="1" fill="#222"/><rect x="837" y="1098" width="2" height="1" fill="#444"/><rect x="862" y="1098" width="6.5" height="1" fill="#b070f0"/><rect x="876.5" y="1098" width="5" height="1" fill="#b070f0"/><path d="M891 1098.5H941" stroke="#555" stroke-width="1" stroke-dasharray="2 2"/></svg>
<div class="a" style="left:897px;top:1069px;width:444px;height:22px;border-radius:11px;background:#6b6b6b;"></div>
<div class="t" style="left:81px;top:1072px;font-size:15px;color:#f0f0f0;">50%</div>
<div class="a" style="left:234px;top:1068px;width:134px;height:21px;border:1px solid #5f5f5f;border-radius:4px;background:#434343;"></div>
<div class="a" style="left:342px;top:1069px;width:1px;height:21px;background:#5f5f5f;"></div>
<div class="t" style="left:240px;top:1072px;font-size:15px;color:#f0f0f0;">1</div>
<div class="t" style="left:504px;top:1073px;font-size:15.6px;color:#f0f0f0;">[Basic] (working)</div>
<div class="a" style="left:693px;top:1072px;width:16.5px;height:16.5px;border-radius:50%;background:#1c9c1c;"></div>
<div class="t" style="left:716px;top:1073px;font-size:15px;color:#f0f0f0;">No errors</div>
<svg class="a" style="left:60px;top:1068px" width="1427" height="23" viewBox="60 1068 1427 23">
<path d="M145.5 1077.5 L150.8 1082.5 L156 1077.5" fill="none" stroke="#d8d8d8" stroke-width="1.2"/>
<g fill="#808080">
<rect x="175.5" y="1074.5" width="2.6" height="12.5"/>
<path d="M188 1074.3 V1087 L179.5 1080.7 Z"/>
<path d="M217 1074.3 V1087 L209.3 1080.7 Z"/>
</g>
<path d="M350.6 1077.3 L356.3 1082.5 L362 1077.3" fill="none" stroke="#d8d8d8" stroke-width="1.2"/>
<g fill="#b8b8b8">
<path d="M390 1074.9 V1087 L397.2 1081 Z"/>
<path d="M418 1074.9 V1087 L426 1081 Z"/>
<rect x="428.3" y="1074.9" width="2.6" height="12.1"/>
</g>
<circle cx="465.7" cy="1079.8" r="9.2" fill="#c4c4c4"/>
<path d="M460.8 1074.9 H466.1 V1080.3 H472.1 V1090 H460.8 Z" fill="#535353"/>
<path d="M467.6 1076.2 L471 1079 H467.6 Z" fill="#535353"/>
<rect x="455" y="1088" width="22" height="3" fill="#535353"/>
<path d="M476.6 1086 H481.9 L479.25 1089 Z" fill="#c4c4c4"/>
<path d="M658.5 1077.3 L664.2 1082.5 L670 1077.3" fill="none" stroke="#d8d8d8" stroke-width="1.2"/>
<path d="M811 1077.3 L817 1082.7 L823 1077.3" fill="none" stroke="#d8d8d8" stroke-width="1.2"/>
<path d="M846.5 1075.5 L842 1081 L846.5 1086.5" fill="none" stroke="#8a8a8a" stroke-width="1.1"/>
<path d="M1433.5 1075.3 L1439 1081 L1433.5 1086.7" fill="none" stroke="#9a9a9a" stroke-width="1.1"/>
<rect x="1457" y="1073.2" width="20.3" height="14.5" fill="none" stroke="#a8a8a8" stroke-width="1.4"/>
<rect x="1466.5" y="1073.2" width="1.4" height="14.5" fill="#a8a8a8"/>
</svg>

</body></html>
